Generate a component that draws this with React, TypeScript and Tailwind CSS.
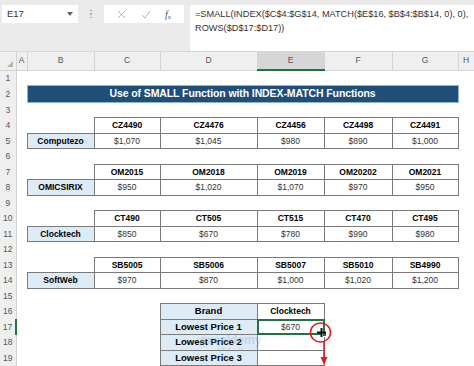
import React from 'react';

const COL_W = [16, 11, 67, 66, 97, 67, 68, 66, 16];
const COL_LETTERS = ['', 'A', 'B', 'C', 'D', 'E', 'F', 'G', 'H'];

const PRODUCTS: { row: number; brand: string; codes: string[]; prices: string[] }[] = [
  { row: 4, brand: 'Computezo', codes: ['CZ4490', 'CZ4476', 'CZ4456', 'CZ4498', 'CZ4491'], prices: ['$1,070', '$1,045', '$980', '$890', '$1,000'] },
  { row: 7, brand: 'OMICSIRIX', codes: ['OM2015', 'OM2018', 'OM2019', 'OM20202', 'OM2021'], prices: ['$950', '$1,020', '$1,070', '$970', '$950'] },
  { row: 10, brand: 'Clocktech', codes: ['CT490', 'CT505', 'CT515', 'CT470', 'CT495'], prices: ['$850', '$670', '$780', '$990', '$980'] },
  { row: 13, brand: 'SoftWeb', codes: ['SB5005', 'SB5006', 'SB5007', 'SB5010', 'SB4990'], prices: ['$970', '$870', '$1,000', '$1,020', '$1,200'] },
];

const font = { fontFamily: '"Liberation Sans", Arial, sans-serif' };

function Empty({ n }: { n: number }) {
  return (
    <>
      {Array.from({ length: n }).map((_, i) => (
        <td key={i} />
      ))}
    </>
  );
}

function RowHead({ n }: { n: number }) {
  const active = n === 17;
  return (
    <td
      className={`bg-[#efefef] text-center text-[8.5px] border-r ${
        active ? 'text-[#217346] border-r-[#217346] border-r-2 bg-[#dcdcdc]' : 'text-[#555] border-r-[#d4d4d4]'
      }`}
    >
      {n}
    </td>
  );
}

function SheetRow({ n }: { n: number }) {
  const head = PRODUCTS.find((p) => p.row === n);
  const vals = PRODUCTS.find((p) => p.row + 1 === n);

  let cells: React.ReactNode = <Empty n={8} />;

  if (n === 2) {
    cells = (
      <>
        <td />
        <td
          colSpan={6}
          className="bg-[#1f4e79] border border-[#8fb4d9] text-center text-white font-bold text-[10.5px] tracking-[-0.1px]"
        >
          Use of SMALL Function with INDEX-MATCH Functions
        </td>
        <td />
      </>
    );
  } else if (head) {
    cells = (
      <>
        <td />
        <td />
        {head.codes.map((c) => (
          <td key={c} className="border border-[#7a7a7a] text-center font-bold text-[8.5px] text-black">
            {c}
          </td>
        ))}
        <td />
      </>
    );
  } else if (vals) {
    cells = (
      <>
        <td />
        <td className="border border-[#7a7a7a] bg-[#ddebf7] text-center font-bold text-[8.5px] text-black">
          {vals.brand}
        </td>
        {vals.prices.map((p, i) => (
          <td key={i} className="border border-[#7a7a7a] text-center text-[8.5px] text-[#333]">
            {p}
          </td>
        ))}
        <td />
      </>
    );
  } else if (n >= 16) {
    const label = n === 16 ? 'Brand' : `Lowest Price ${n - 16}`;
    const value = n === 16 ? 'Clocktech' : n === 17 ? '$670' : '';
    cells = (
      <>
        <td />
        <td />
        <td />
        <td className="border border-[#7a7a7a] bg-[#ddebf7] text-center font-bold text-[9.5px] text-black">
          {label}
        </td>
        <td
          className={`text-center text-[8.5px] border border-[#7a7a7a] ${
            n === 16 ? 'font-bold text-black' : 'text-[#333]'
          } ${n === 17 ? 'relative' : ''}`}
        >
          {value}
          {n === 17 && (
            <>
              <div className="absolute -inset-px border-2 border-[#217346]" />
              <div className="absolute -right-[3px] -bottom-[3px] w-[5px] h-[5px] bg-[#217346] border border-white" />
            </>
          )}
        </td>
        <td />
        <td />
        <td />
      </>
    );
  }

  return (
    <tr className="h-[15.5px]">
      <RowHead n={n} />
      {cells}
    </tr>
  );
}

export default function App() {
  return (
    <div className="w-[474px] h-[366px] overflow-hidden bg-white relative" style={font}>
      {/* Formula bar */}
      <div className="h-[52px] bg-[#eaeaea] flex items-start pt-[5px] pl-[2px] gap-[6px] border-b border-[#d6d6d6]">
        <div className="w-[76px] h-[18px] bg-white flex items-center justify-between px-[5px] text-[9.5px] text-[#333]">
          <span>E17</span>
          <svg width="6" height="4" viewBox="0 0 6 4">
            <path d="M0 0h6L3 4z" fill="#666" />
          </svg>
        </div>
        <div className="w-[14px] h-[18px] flex items-center justify-center">
          <div className="flex flex-col gap-[2px]">
            <span className="w-[1.5px] h-[1.5px] bg-[#aaa]" />
            <span className="w-[1.5px] h-[1.5px] bg-[#aaa]" />
            <span className="w-[1.5px] h-[1.5px] bg-[#aaa]" />
          </div>
        </div>
        <div className="w-[80px] h-[18px] bg-white flex items-center justify-around px-[6px]">
          <svg width="9" height="9" viewBox="0 0 9 9">
            <path d="M1 1l7 7M8 1L1 8" stroke="#b5b5b5" strokeWidth="1" />
          </svg>
          <svg width="10" height="9" viewBox="0 0 10 9">
            <path d="M1 5l3 3 5-7" stroke="#b5b5b5" strokeWidth="1" fill="none" />
          </svg>
          <span className="italic text-[10px] text-[#555]" style={{ fontFamily: '"Liberation Serif", serif' }}>
            f<sub className="text-[7px]">x</sub>
          </span>
        </div>
        <div className="flex-1 h-[46px] bg-white pl-[5px] pt-[2px] text-[9.2px] leading-[14px] text-[#333] whitespace-nowrap">
          <div>=SMALL(INDEX($C$4:$G$14, MATCH($E$16, $B$4:$B$14, 0), 0),</div>
          <div>ROWS($D$17:$D17))</div>
        </div>
      </div>

      {/* Sheet */}
      <table className="table-fixed border-collapse" style={{ width: COL_W.reduce((a, b) => a + b, 0) }}>
        <colgroup>
          {COL_W.map((w, i) => (
            <col key={i} style={{ width: w }} />
          ))}
        </colgroup>
        <thead>
          <tr className="h-[18px]">
            {COL_LETTERS.map((c, i) => (
              <th
                key={i}
                className={`font-normal text-[8.5px] text-[#555] border-r border-[#d4d4d4] ${
                  c === 'E' ? 'bg-[#d6d6d6] border-b-2 border-b-[#217346]' : 'bg-[#efefef] border-b border-b-[#d4d4d4]'
                } ${i === 0 ? 'relative' : ''}`}
              >
                {i === 0 ? (
                  <svg className="absolute right-[3px] bottom-[3px]" width="6" height="6" viewBox="0 0 6 6">
                    <path d="M6 0v6H0z" fill="#b4b4b4" />
                  </svg>
                ) : (
                  c
                )}
              </th>
            ))}
          </tr>
        </thead>
        <tbody>
          {Array.from({ length: 19 }).map((_, i) => (
            <SheetRow key={i} n={i + 1} />
          ))}
        </tbody>
      </table>

      {/* Watermark */}
      <div className="absolute left-[200px] top-[334px] flex flex-col items-center opacity-30 pointer-events-none">
        <span className="text-[12px] leading-[12px] font-bold text-[#7d9fd1]">exceldemy</span>
        <span className="text-[4px] leading-[5px] tracking-[1px] text-[#7d9fd1]">DATA · BI</span>
      </div>

      {/* Fill handle cursor, circle and arrow */}
      <svg className="absolute left-[305px] top-[320px]" width="32" height="46" viewBox="0 0 32 46">
        <ellipse cx="15.5" cy="12.5" rx="10" ry="9.5" fill="none" stroke="#e02020" strokeWidth="1.6" />
        <path d="M16.5 8v9M12 12.5h9" stroke="#111" strokeWidth="2" />
        <path d="M19 22v16" stroke="#e02020" strokeWidth="1.6" />
        <path d="M15.5 37h7L19 45z" fill="#e02020" />
      </svg>
    </div>
  );
}
